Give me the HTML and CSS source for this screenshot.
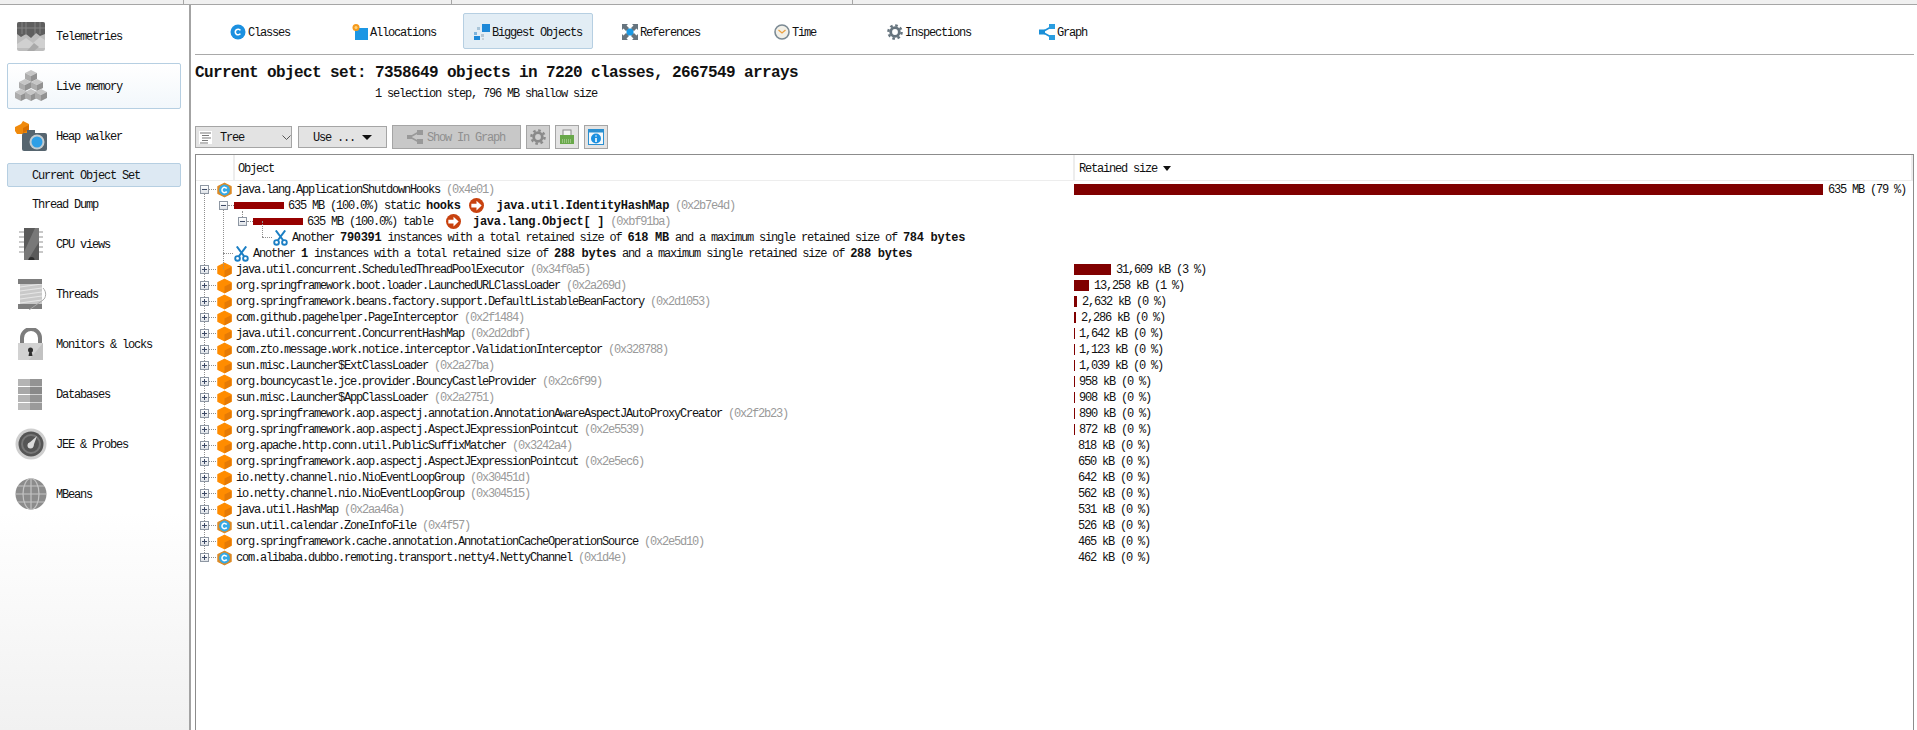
FILE: index.html
```html
<!DOCTYPE html>
<html lang="en">
  <head>
    <meta charset="UTF-8" />
    <title>Biggest Objects</title>
    <link rel="stylesheet" href="styles.css">
  </head>
  <body>
    <!-- shared icons -->
    <svg class="defs" width="0" height="0">
      <symbol id="hex" viewBox="0 0 16 16">
        <polygon points="8,0.8 15,4.4 15,11.600 8,15.200 1,11.600 1,4.400" fill="#ff8c00" stroke="#ff8c00" stroke-width="1.400" stroke-linejoin="round"/>
        <polygon points="8,8.500 15.500,4.800 15.500,11.800 8,15.800" fill="#e57a05"/>
      </symbol>
      <symbol id="hex-class" viewBox="0 0 16 16">
        <polygon points="8,0.8 15,4.4 15,11.600 8,15.200 1,11.600 1,4.400" fill="#dc8a26" stroke="#dc8a26" stroke-width="1.400" stroke-linejoin="round"/>
        <circle cx="8" cy="8" r="5.800" fill="#35a9e6"/>
        <path d="M10.400 6.400A2.800 2.800 0 1 0 10.400 9.600" fill="none" stroke="#fff" stroke-width="1.600"/>
      </symbol>
      <symbol id="scissors" viewBox="0 0 16 16">
        <path d="M3 0L10.800 10.400M13 0L5.200 10.400" fill="none" stroke="#1c7fc4" stroke-width="2.200"/>
        <circle cx="3.800" cy="12.700" r="2.500" fill="none" stroke="#1c7fc4" stroke-width="2"/>
        <circle cx="12.200" cy="12.700" r="2.500" fill="none" stroke="#1c7fc4" stroke-width="2"/>
      </symbol>
      <symbol id="arrow" viewBox="0 0 16 16">
        <circle cx="8" cy="8" r="8" fill="#c8420f"/>
        <polygon points="2.500,6 8,6 8,2.800 13.500,8 8,13.200 8,10 2.500,10" fill="#fff"/>
      </symbol>
      <symbol id="cube" viewBox="0 0 14 14">
        <polygon points="7,0 14,3.5 7,7 0,3.5" fill="#c6c6c6"/>
        <polygon points="0,3.5 7,7 7,14 0,10.5" fill="#acacac"/>
        <polygon points="14,3.5 7,7 7,14 14,10.5" fill="#929292"/>
      </symbol>
    </svg>

    <div class="top-strip">
      <div class="strip-cell strip-a"></div>
      <div class="strip-cell strip-b"></div>
      <div class="strip-cell strip-c"></div>
    </div>

    <div class="app">
      <!-- left navigation -->
      <nav class="sidebar">
        <div class="nav-item">
          <svg class="nav-icon" viewBox="0 0 32 32">
            <rect x="2" y="2" width="28" height="29" rx="2" fill="#bdbdbd"/>
            <path d="M2 4a2 2 0 0 1 2-2h24a2 2 0 0 1 2 2v10l-5 2-4-3-5 5-5-4-5 3-4-3z" fill="#5f5f5f"/>
            <path d="M2 8h28M11 2v13M20 2v12M7 2v12M25 2v12" stroke="#848484" stroke-width="1"/>
            <path d="M2 24l9-6 7 5 7-6 5 3v8H2z" fill="#d0d0d0"/>
            <path d="M12 31l7-8 5 4-5 4z" fill="#a9a9a9"/>
          </svg>
          <span>Telemetries</span>
        </div>
        <div class="nav-item nav-active">
          <svg class="nav-icon" viewBox="0 0 32 32">
            <use href="#cube" x="10" y="0" width="12" height="12"/>
            <use href="#cube" x="4" y="9" width="12" height="12"/>
            <use href="#cube" x="16" y="9" width="12" height="12"/>
            <use href="#cube" x="0" y="19" width="12" height="12"/>
            <use href="#cube" x="10" y="19" width="12" height="12"/>
            <use href="#cube" x="20" y="19" width="12" height="12"/>
          </svg>
          <span>Live memory</span>
        </div>
        <div class="nav-item">
          <svg class="nav-icon" viewBox="0 0 32 32">
            <polygon points="8,1 14,4 14,10 20,10 20,15 14,17 8,14 2,14 0,11 0,7 6,4" fill="#f08a0c"/>
            <polygon points="8,8 14,5 14,10 8,13" fill="#d87000"/>
            <rect x="7" y="13" width="25" height="18" rx="2" fill="#56656f"/>
            <rect x="12" y="10" width="8" height="4" fill="#56656f"/>
            <circle cx="22" cy="22" r="7.5" fill="#c4ccd0"/>
            <circle cx="22" cy="22" r="5.5" fill="#2f9fe6"/>
          </svg>
          <span>Heap walker</span>
        </div>
        <div class="nav-sub nav-sub-active">Current Object Set</div>
        <div class="nav-sub">Thread Dump</div>
        <div class="nav-item nav-gap">
          <svg class="nav-icon" viewBox="0 0 32 32">
            <path d="M4 4h24M4 9h24M4 14h24M4 19h24M4 24h24" stroke="#c8c8c8" stroke-width="2"/>
            <rect x="9" y="0" width="15" height="32" fill="#5a5a5a"/>
            <polygon points="24,0 24,14 13,32 9,32 9,24 20,0" fill="#787878"/>
            <circle cx="16.500" cy="32" r="3" fill="#2e2e2e"/>
          </svg>
          <span>CPU views</span>
        </div>
        <div class="nav-item">
          <svg class="nav-icon" viewBox="0 0 32 32">
            <rect x="5" y="5" width="22" height="23" fill="#c9c9c9"/>
            <path d="M5 9l22-3M5 13l22-3M5 17l22-3M5 21l22-3M5 25l22-3" stroke="#e6e6e6" stroke-width="1.200"/>
            <rect x="3" y="1" width="24" height="5" fill="#7d7d7d"/>
            <rect x="3" y="26" width="24" height="5" fill="#7d7d7d"/>
            <path d="M28 10c4 4 3 10 0 12L14 32" fill="none" stroke="#a9a9a9" stroke-width="1"/>
          </svg>
          <span>Threads</span>
        </div>
        <div class="nav-item">
          <svg class="nav-icon" viewBox="0 0 32 32">
            <path d="M7 18V10a9 9 0 0 1 18 0v8" fill="none" stroke="#7d7d7d" stroke-width="4"/>
            <rect x="3" y="15" width="25" height="17" fill="#d2d2d2"/>
            <polygon points="28,15 28,32 14,32" fill="#c2c2c2"/>
            <circle cx="15.500" cy="22" r="2.500" fill="#2e2e2e"/>
            <polygon points="14.500,23 16.500,23 17.500,28 13.500,28" fill="#2e2e2e"/>
          </svg>
          <span>Monitors &amp; locks</span>
        </div>
        <div class="nav-item">
          <svg class="nav-icon" viewBox="0 0 32 32">
            <rect x="3" y="1" width="24" height="7" fill="#b4b4b4"/>
            <rect x="3" y="9" width="24" height="7" fill="#a8a8a8"/>
            <rect x="3" y="17" width="24" height="7" fill="#b4b4b4"/>
            <rect x="3" y="25" width="24" height="7" fill="#bcbcbc"/>
            <rect x="15" y="1" width="12" height="31" fill="#000" opacity=".18"/>
          </svg>
          <span>Databases</span>
        </div>
        <div class="nav-item">
          <svg class="nav-icon" viewBox="0 0 32 32">
            <circle cx="16" cy="16" r="15.500" fill="#cfcfcf"/>
            <circle cx="16" cy="16" r="12.500" fill="#555"/>
            <circle cx="16" cy="16" r="9" fill="none" stroke="#777" stroke-width="2"/>
            <polygon points="22,8 18,19 13,16" fill="#dcdcdc"/>
            <circle cx="15.500" cy="17.500" r="3" fill="#dcdcdc"/>
          </svg>
          <span>JEE &amp; Probes</span>
        </div>
        <div class="nav-item">
          <svg class="nav-icon" viewBox="0 0 32 32">
            <circle cx="16" cy="16" r="15.500" fill="#8c8c8c"/>
            <path d="M1 16h30M3 8h26M3 24h26M16 1v30" stroke="#c4c4c4" stroke-width="1.200"/>
            <ellipse cx="16" cy="16" rx="8" ry="15.500" fill="none" stroke="#c4c4c4" stroke-width="1.200"/>
          </svg>
          <span>MBeans</span>
        </div>
      </nav>

      <main class="main">
        <!-- view tabs -->
        <div class="tabs">
          <div class="tab">
            <svg class="icon" viewBox="0 0 16 16">
              <circle cx="8" cy="8" r="7.500" fill="#1b90e0"/>
              <path d="M10.400 6.400A2.800 2.800 0 1 0 10.400 9.600" fill="none" stroke="#fff" stroke-width="1.600"/>
            </svg>
            <span>Classes</span>
          </div>
          <div class="tab">
            <svg class="icon" viewBox="0 0 16 16">
              <rect x="3" y="4" width="13" height="12" fill="#1c97e4"/>
              <circle cx="4" cy="3.500" r="3.500" fill="#f59a1c"/>
              <circle cx="4" cy="3.500" r="1.500" fill="#ffd27a"/>
            </svg>
            <span>Allocations</span>
          </div>
          <div class="tab-slot">
            <div class="tab tab-active">
              <svg class="icon" viewBox="0 0 16 16">
                <rect x="8" y="0" width="8" height="8" fill="#1c88d8"/>
                <rect x="3" y="3" width="3" height="3" fill="#a8c4d8"/>
                <rect x="0" y="8" width="3" height="3" fill="#7fb4dc"/>
                <rect x="0" y="12" width="6" height="4" fill="#1c88d8"/>
                <rect x="7" y="10" width="3" height="3" fill="#b6c6d2"/>
                <rect x="8" y="14" width="2" height="2" fill="#c4d0d8"/>
              </svg>
              <span>Biggest Objects</span>
            </div>
          </div>
          <div class="tab">
            <svg class="icon" viewBox="0 0 16 16">
              <rect x="4.500" y="4.500" width="7" height="7" fill="#1a9ae6"/>
              <path d="M0 0h6L4.500 1.500 7 4 4 7 1.500 4.500 0 6zM16 0v6L14.500 4.500 12 7 9 4 11.500 1.500 10 0zM0 16v-6l1.500 1.500L4 9l3 3-2.500 2.500L6 16zM16 16h-6l1.500-1.500L9 12l3-3 2.500 2.500L16 10z" fill="#66747e"/>
            </svg>
            <span>References</span>
          </div>
          <div class="tab">
            <svg class="icon" viewBox="0 0 16 16">
              <circle cx="8" cy="8" r="7" fill="#f2f0e8" stroke="#7b8a94" stroke-width="1.600"/>
              <path d="M4.500 6L8 9l3.500-3" fill="none" stroke="#eca040" stroke-width="1.300"/>
            </svg>
            <span>Time</span>
          </div>
          <div class="tab">
            <svg class="icon" viewBox="0 0 16 16">
              <circle cx="8" cy="8" r="6.600" fill="none" stroke="#66747e" stroke-width="2.400" stroke-dasharray="2.600 2.580"/>
              <circle cx="8" cy="8" r="4.300" fill="none" stroke="#66747e" stroke-width="2.800"/>
            </svg>
            <span>Inspections</span>
          </div>
          <div class="tab">
            <svg class="icon" viewBox="0 0 16 16">
              <path d="M3 8L12 3M3 8l9 5" stroke="#1a8fd8" stroke-width="1.500"/>
              <rect x="0" y="5.500" width="6" height="5" fill="#1a8fd8"/>
              <polygon points="10,0 16,0 16,5 10,5" fill="#2a9de0"/>
              <polygon points="10,11 16,11 16,16 10,16" fill="#2a9de0"/>
            </svg>
            <span>Graph</span>
          </div>
        </div>

        <h1 class="set-title">Current object set: 7358649 objects in 7220 classes, 2667549 arrays</h1>
        <p class="set-sub">1 selection step, 796 MB shallow size</p>

        <!-- toolbar -->
        <div class="toolbar">
          <div class="btn btn-tree">
            <svg class="tree-glyph" viewBox="0 0 13 13">
              <rect width="13" height="13" fill="#fff"/>
              <path d="M1 2h11M3 4.500h7M3 7h9M3 9.500h6M1 12h8" stroke="#777" stroke-width="1"/>
            </svg>
            <span>Tree</span>
            <svg class="chevron" viewBox="0 0 9 5"><path d="M0.500 0.500L4.500 4.500 8.500 0.500" fill="none" stroke="#555" stroke-width="1"/></svg>
          </div>
          <div class="btn btn-use">
            <span>Use ...</span>
            <span class="caret"></span>
          </div>
          <div class="btn btn-graph">
            <svg class="icon" viewBox="0 0 16 16">
              <path d="M3 8L12 3M3 8l9 5" stroke="#999" stroke-width="1.500"/>
              <rect x="0" y="6" width="5" height="4" fill="#999"/>
              <rect x="10" y="1" width="6" height="5" fill="#999"/>
              <rect x="10" y="10" width="6" height="5" fill="#999"/>
            </svg>
            <span>Show In Graph</span>
          </div>
          <div class="btn btn-square btn-disabled">
            <svg class="icon" viewBox="0 0 16 16">
              <circle cx="8" cy="8" r="6.600" fill="none" stroke="#8a8a8a" stroke-width="2.400" stroke-dasharray="2.600 2.580"/>
              <circle cx="8" cy="8" r="4.300" fill="none" stroke="#8a8a8a" stroke-width="2.800"/>
            </svg>
          </div>
          <div class="btn btn-square">
            <svg class="icon" viewBox="0 0 16 16">
              <rect x="4" y="1" width="8" height="6" fill="#f4f4f4" stroke="#8a8a8a"/>
              <rect x="1" y="6" width="14" height="9" fill="#69a84a"/>
              <path d="M3 11h10M3 13h10" stroke="#c6e0b4" stroke-width="1" stroke-dasharray="1 1"/>
            </svg>
          </div>
          <div class="btn btn-square">
            <svg class="icon" viewBox="0 0 16 16">
              <rect x="0.500" y="0.500" width="15" height="15" fill="#f4f8fb" stroke="#2b8fd0"/>
              <rect x="0.500" y="0.500" width="15" height="3" fill="#2b8fd0"/>
              <circle cx="8" cy="9.500" r="5" fill="#1b90e0"/>
              <path d="M8 6.500v1M8 9v4" stroke="#fff" stroke-width="1.600"/>
            </svg>
          </div>
        </div>

        <!-- object table -->
        <div class="table">
          <div class="table-head">
            <div class="head-gutter"></div>
            <div class="head-cell head-object">Object</div>
            <div class="head-cell head-size">Retained size <span class="sort-caret"></span></div>
          </div>

          <div class="table-body">
            <div class="guide guide-root"></div>
            <div class="guide guide-hooks"></div>
            <div class="guide guide-table"></div>
            <div class="guide guide-another"></div>

            <div class="row">
              <div class="tree-cell lvl-0">
                <span class="exp exp-open"></span><span class="dots"></span>
                <svg class="node"><use href="#hex-class"/></svg>
                <span>java.lang.ApplicationShutdownHooks <i>(0x4e01)</i></span>
              </div>
              <div class="size-cell"><span class="bar bar-gap" style="width:749px"></span><span class="size">635 MB (79 %)</span></div>
            </div>
            <div class="row">
              <div class="tree-cell lvl-1">
                <span class="exp exp-open"></span><span class="dots dots-short"></span>
                <span class="ref-bar"></span>
                <span>635 MB (100.0%) static <b>hooks</b></span>
                <svg class="ref-arrow"><use href="#arrow"/></svg>
                <span><b>java.util.IdentityHashMap</b> <i>(0x2b7e4d)</i></span>
              </div>
              <div class="size-cell"></div>
            </div>
            <div class="row">
              <div class="tree-cell lvl-2">
                <span class="exp exp-open"></span><span class="dots dots-short"></span>
                <span class="ref-bar"></span>
                <span>635 MB (100.0%) table</span>
                <svg class="ref-arrow ref-arrow-wide"><use href="#arrow"/></svg>
                <span><b>java.lang.Object[ ]</b> <i>(0xbf91ba)</i></span>
              </div>
              <div class="size-cell"></div>
            </div>
            <div class="row">
              <div class="tree-cell lvl-3">
                <span class="dots dots-long"></span>
                <svg class="node node-cut"><use href="#scissors"/></svg>
                <span>Another <b>790391</b> instances with a total retained size of <b>618 MB</b> and a maximum single retained size of <b>784 bytes</b></span>
              </div>
              <div class="size-cell"></div>
            </div>
            <div class="row">
              <div class="tree-cell lvl-1b">
                <span class="dots dots-long"></span>
                <svg class="node node-cut"><use href="#scissors"/></svg>
                <span>Another <b>1</b> instances with a total retained size of <b>288 bytes</b> and a maximum single retained size of <b>288 bytes</b></span>
              </div>
              <div class="size-cell"></div>
            </div>

            <div class="row">
              <div class="tree-cell lvl-0"><span class="exp"></span><span class="dots"></span><svg class="node"><use href="#hex"/></svg><span>java.util.concurrent.ScheduledThreadPoolExecutor <i>(0x34f0a5)</i></span></div>
              <div class="size-cell"><span class="bar bar-gap" style="width:37px"></span><span class="size">31,609 kB (3 %)</span></div>
            </div>
            <div class="row">
              <div class="tree-cell lvl-0"><span class="exp"></span><span class="dots"></span><svg class="node"><use href="#hex"/></svg><span>org.springframework.boot.loader.LaunchedURLClassLoader <i>(0x2a269d)</i></span></div>
              <div class="size-cell"><span class="bar bar-gap" style="width:15px"></span><span class="size">13,258 kB (1 %)</span></div>
            </div>
            <div class="row">
              <div class="tree-cell lvl-0"><span class="exp"></span><span class="dots"></span><svg class="node"><use href="#hex"/></svg><span>org.springframework.beans.factory.support.DefaultListableBeanFactory <i>(0x2d1053)</i></span></div>
              <div class="size-cell"><span class="bar bar-gap" style="width:3px"></span><span class="size">2,632 kB (0 %)</span></div>
            </div>
            <div class="row">
              <div class="tree-cell lvl-0"><span class="exp"></span><span class="dots"></span><svg class="node"><use href="#hex"/></svg><span>com.github.pagehelper.PageInterceptor <i>(0x2f1484)</i></span></div>
              <div class="size-cell"><span class="bar bar-gap" style="width:2px"></span><span class="size">2,286 kB (0 %)</span></div>
            </div>
            <div class="row">
              <div class="tree-cell lvl-0"><span class="exp"></span><span class="dots"></span><svg class="node"><use href="#hex"/></svg><span>java.util.concurrent.ConcurrentHashMap <i>(0x2d2dbf)</i></span></div>
              <div class="size-cell"><span class="bar" style="width:1px"></span><span class="size">1,642 kB (0 %)</span></div>
            </div>
            <div class="row">
              <div class="tree-cell lvl-0"><span class="exp"></span><span class="dots"></span><svg class="node"><use href="#hex"/></svg><span>com.zto.message.work.notice.interceptor.ValidationInterceptor <i>(0x328788)</i></span></div>
              <div class="size-cell"><span class="bar" style="width:1px"></span><span class="size">1,123 kB (0 %)</span></div>
            </div>
            <div class="row">
              <div class="tree-cell lvl-0"><span class="exp"></span><span class="dots"></span><svg class="node"><use href="#hex"/></svg><span>sun.misc.Launcher$ExtClassLoader <i>(0x2a27ba)</i></span></div>
              <div class="size-cell"><span class="bar" style="width:1px"></span><span class="size">1,039 kB (0 %)</span></div>
            </div>
            <div class="row">
              <div class="tree-cell lvl-0"><span class="exp"></span><span class="dots"></span><svg class="node"><use href="#hex"/></svg><span>org.bouncycastle.jce.provider.BouncyCastleProvider <i>(0x2c6f99)</i></span></div>
              <div class="size-cell"><span class="bar" style="width:1px"></span><span class="size">958 kB (0 %)</span></div>
            </div>
            <div class="row">
              <div class="tree-cell lvl-0"><span class="exp"></span><span class="dots"></span><svg class="node"><use href="#hex"/></svg><span>sun.misc.Launcher$AppClassLoader <i>(0x2a2751)</i></span></div>
              <div class="size-cell"><span class="bar" style="width:1px"></span><span class="size">908 kB (0 %)</span></div>
            </div>
            <div class="row">
              <div class="tree-cell lvl-0"><span class="exp"></span><span class="dots"></span><svg class="node"><use href="#hex"/></svg><span>org.springframework.aop.aspectj.annotation.AnnotationAwareAspectJAutoProxyCreator <i>(0x2f2b23)</i></span></div>
              <div class="size-cell"><span class="bar" style="width:1px"></span><span class="size">890 kB (0 %)</span></div>
            </div>
            <div class="row">
              <div class="tree-cell lvl-0"><span class="exp"></span><span class="dots"></span><svg class="node"><use href="#hex"/></svg><span>org.springframework.aop.aspectj.AspectJExpressionPointcut <i>(0x2e5539)</i></span></div>
              <div class="size-cell"><span class="bar" style="width:1px"></span><span class="size">872 kB (0 %)</span></div>
            </div>
            <div class="row">
              <div class="tree-cell lvl-0"><span class="exp"></span><span class="dots"></span><svg class="node"><use href="#hex"/></svg><span>org.apache.http.conn.util.PublicSuffixMatcher <i>(0x3242a4)</i></span></div>
              <div class="size-cell"><span class="size">818 kB (0 %)</span></div>
            </div>
            <div class="row">
              <div class="tree-cell lvl-0"><span class="exp"></span><span class="dots"></span><svg class="node"><use href="#hex"/></svg><span>org.springframework.aop.aspectj.AspectJExpressionPointcut <i>(0x2e5ec6)</i></span></div>
              <div class="size-cell"><span class="size">650 kB (0 %)</span></div>
            </div>
            <div class="row">
              <div class="tree-cell lvl-0"><span class="exp"></span><span class="dots"></span><svg class="node"><use href="#hex"/></svg><span>io.netty.channel.nio.NioEventLoopGroup <i>(0x30451d)</i></span></div>
              <div class="size-cell"><span class="size">642 kB (0 %)</span></div>
            </div>
            <div class="row">
              <div class="tree-cell lvl-0"><span class="exp"></span><span class="dots"></span><svg class="node"><use href="#hex"/></svg><span>io.netty.channel.nio.NioEventLoopGroup <i>(0x304515)</i></span></div>
              <div class="size-cell"><span class="size">562 kB (0 %)</span></div>
            </div>
            <div class="row">
              <div class="tree-cell lvl-0"><span class="exp"></span><span class="dots"></span><svg class="node"><use href="#hex"/></svg><span>java.util.HashMap <i>(0x2aa46a)</i></span></div>
              <div class="size-cell"><span class="size">531 kB (0 %)</span></div>
            </div>
            <div class="row">
              <div class="tree-cell lvl-0"><span class="exp"></span><span class="dots"></span><svg class="node"><use href="#hex-class"/></svg><span>sun.util.calendar.ZoneInfoFile <i>(0x4f57)</i></span></div>
              <div class="size-cell"><span class="size">526 kB (0 %)</span></div>
            </div>
            <div class="row">
              <div class="tree-cell lvl-0"><span class="exp"></span><span class="dots"></span><svg class="node"><use href="#hex"/></svg><span>org.springframework.cache.annotation.AnnotationCacheOperationSource <i>(0x2e5d10)</i></span></div>
              <div class="size-cell"><span class="size">465 kB (0 %)</span></div>
            </div>
            <div class="row">
              <div class="tree-cell lvl-0"><span class="exp"></span><span class="dots"></span><svg class="node"><use href="#hex-class"/></svg><span>com.alibaba.dubbo.remoting.transport.netty4.NettyChannel <i>(0x1d4e)</i></span></div>
              <div class="size-cell"><span class="size">462 kB (0 %)</span></div>
            </div>
          </div>
        </div>
      </main>
    </div>
  </body>
</html>
```

FILE: styles.css
```css
/* Page */
html,
body {
  margin: 0;
  height: 730px;
  overflow: hidden;
  background: #fff;
}

body {
  font-family: "Liberation Mono", "DejaVu Sans Mono", monospace;
  font-size: 12px;
  letter-spacing: -1.2px; /* 6px per character, like the bitmap font of the app */
  color: #111;
}

.defs {
  position: absolute;
}

/* Remains of the window above */
.top-strip {
  display: flex;
  height: 4px;
  background: #f0f0f0;
  border-bottom: 1px solid #a6a6a6;
}

.strip-cell {
  border-right: 1px solid #a6a6a6;
}

.strip-a { width: 183px; }
.strip-b { width: 267px; }
.strip-c { width: 400px; }

.app {
  display: flex;
  height: 725px;
}

/* Sidebar */
.sidebar {
  box-sizing: border-box;
  width: 191px;
  padding: 8px 8px 0 7px;
  flex: none;
  border-right: 2px solid #a3a3a3;
  background: linear-gradient(#fff 70%, #f1f1f1);
}

.nav-item {
  box-sizing: border-box;
  display: flex;
  align-items: center;
  gap: 9px;
  height: 46px;
  margin-bottom: 4px;
  padding-left: 7px;
  border: 1px solid transparent;
  border-radius: 2px;
}

.nav-item span {
  padding-top: 2px;
}

.nav-active {
  border-color: #b6cfe2;
  background: linear-gradient(#fff, #f2f7fb);
}

.nav-gap {
  margin-top: 3px;
}

.nav-icon {
  width: 32px;
  height: 32px;
  flex: none;
}

.nav-sub {
  box-sizing: border-box;
  height: 24px;
  margin-bottom: 5px;
  padding-left: 24px;
  line-height: 24px;
  border: 1px solid transparent;
  border-radius: 2px;
}

.nav-sub-active {
  border-color: #b6cfe2;
  background: #dde9f3;
}

/* Main area */
.main {
  flex: 1;
  min-width: 0;
  padding: 0 3px 0 4px;
}

.tabs {
  display: grid;
  grid-template-columns: 122px 122px 148px 152px 113px 152px auto;
  height: 41px;
  padding: 8px 0 0 24px;
  border-bottom: 1px solid #a9a9a9;
}

.tab {
  box-sizing: border-box;
  display: flex;
  align-items: center;
  gap: 2px;
  height: 36px;
  padding: 1px 0 0 10px;
  border: 1px solid transparent;
}

.tab span {
  padding-top: 2px;
}

.tab-slot {
  display: block;
}

.tab-active {
  width: 130px;
  border-color: #b6cfe2;
  border-radius: 2px;
  background: #e2edf5;
}

.icon {
  width: 16px;
  height: 16px;
  flex: none;
}

.set-title {
  margin: 8px 0 0;
  font-size: 16px;
  line-height: 20px;
  letter-spacing: -0.6px;
  font-weight: bold;
}

.set-sub {
  margin: 0 0 0 180px;
  line-height: 22px;
}

/* Toolbar */
.toolbar {
  display: flex;
  align-items: center;
  gap: 5px;
  height: 24px;
  margin-top: 20px;
}

.btn {
  box-sizing: border-box;
  display: flex;
  align-items: center;
  height: 22px;
  background: #e3e3e3;
  border: 1px solid #a5a5a5;
}

.btn-tree {
  width: 97px;
  margin-right: 1px;
  padding-left: 3px;
}

.btn span {
  padding-top: 2px;
}

.tree-glyph {
  width: 13px;
  height: 13px;
  margin-right: 8px;
}

.chevron {
  width: 9px;
  height: 5px;
  margin-left: 38px;
}

.btn-use {
  width: 89px;
  padding-left: 14px;
}

.btn .caret {
  margin-left: 7px;
  padding: 0;
  border-style: solid;
  border-width: 5px 5px 0;
  border-color: #111 transparent transparent;
}

.btn-graph {
  width: 129px;
  height: 24px;
  gap: 4px;
  padding-left: 14px;
  background: #c8c8c8;
  color: #8f8f8f;
}

.btn-square {
  width: 24px;
  height: 24px;
  justify-content: center;
}

.btn-disabled {
  background: #cfcfcf;
}

/* Table */
.table {
  box-sizing: border-box;
  height: 600px;
  margin-top: 5px;
  border: 1px solid #8c8c8c;
  border-bottom: 0;
}

.table-head {
  box-sizing: border-box;
  display: flex;
  height: 26px;
  border-bottom: 1px solid #ededed;
  line-height: 29px;
}

.head-gutter {
  width: 37px;
  flex: none;
}

.head-cell {
  box-sizing: border-box;
  padding-left: 3px;
  border-left: 2px solid #ededed;
}

.head-object {
  width: 840px;
  flex: none;
}

.head-size {
  flex: 1;
  padding-left: 4px;
  border-right: 2px solid #ededed;
}

.sort-caret {
  display: inline-block;
  vertical-align: 1px;
  margin-left: 0;
  border-style: solid;
  border-width: 5px 4px 0;
  border-color: #111 transparent transparent;
}

.table-body {
  position: relative;
}

/* Dotted tree lines behind the rows */
.guide {
  position: absolute;
  border-left: 1px dotted #8f8f8f;
}

.guide-root { left: 8px; top: 8px; height: 368px; }
.guide-hooks { left: 27px; top: 24px; height: 64px; }
.guide-table { left: 46px; top: 30px; height: 8px; }
.guide-another { left: 66px; top: 40px; height: 16px; }

.row {
  display: grid;
  grid-template-columns: 877px 1fr;
  height: 16px;
  line-height: 16px;
}

.tree-cell {
  display: flex;
  align-items: center;
  white-space: pre;
}

.tree-cell > span:last-child,
.tree-cell > span:not([class]) {
  padding-top: 1px;
}

.lvl-0 { padding-left: 4px; }
.lvl-1 { padding-left: 23px; }
.lvl-1b { padding-left: 27px; }
.lvl-2 { padding-left: 42px; }
.lvl-3 { padding-left: 66px; }

.exp {
  box-sizing: border-box;
  position: relative;
  z-index: 1;
  flex: none;
  width: 9px;
  height: 9px;
  border: 1px solid #8e97a3;
  background:
    linear-gradient(#3d4a66, #3d4a66) center / 5px 1px no-repeat,
    linear-gradient(#3d4a66, #3d4a66) center / 1px 5px no-repeat,
    linear-gradient(#fff, #dfe3e8);
}

.exp-open {
  background:
    linear-gradient(#3d4a66, #3d4a66) center / 5px 1px no-repeat,
    linear-gradient(#fff, #dfe3e8);
}

.dots {
  flex: none;
  width: 7px;
  margin-right: 1px;
  border-top: 1px dotted #8f8f8f;
}

.dots-short {
  width: 6px;
  margin-right: 0;
}

.dots-long {
  width: 10px;
  margin-right: 1px;
}

.node {
  flex: none;
  width: 15px;
  height: 16px;
  margin-right: 4px;
}

.node-cut {
  height: 16px;
  margin-right: 4px;
}

.ref-bar {
  flex: none;
  width: 50px;
  height: 7px;
  margin-right: 4px;
  background: #960000;
}

.ref-arrow {
  flex: none;
  width: 15px;
  height: 15px;
  margin: 0 13px 0 8px;
}

.ref-arrow-wide {
  margin: 0 12px 0 13px;
}

.tree-cell b {
  letter-spacing: -0.3px;
}

.tree-cell i {
  font-style: normal;
  color: #9a9a9a;
}

.size-cell {
  display: flex;
  align-items: center;
  padding-left: 1px;
}

.bar {
  flex: none;
  height: 11px;
  background: #800000;
}

.bar-gap {
  margin-right: 1px;
}

.size {
  margin-left: 4px;
  padding-top: 1px;
  white-space: pre;
}
```
